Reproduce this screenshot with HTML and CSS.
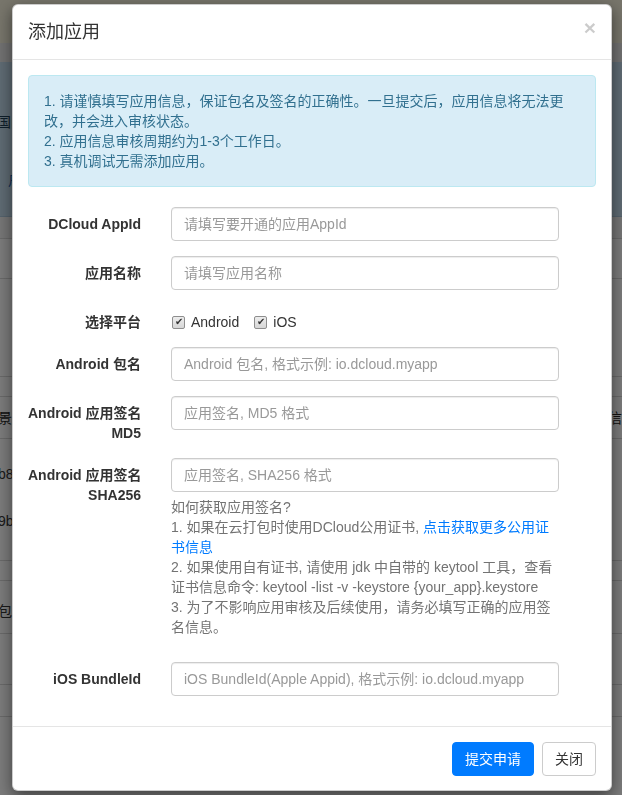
FILE: index.html
```html
<!DOCTYPE html>
<html lang="zh-CN">
  <head>
    <meta charset="UTF-8" />
    <title>添加应用</title>
    <link rel="stylesheet" href="styles.css">
  </head>
  <body>
    <div class="page">
      <div class="topbar"></div>
      <div class="subbar"></div>
      <div class="notice">
        <p class="notice-text">国内用户请注意</p>
        <p class="notice-link">户中心</p>
      </div>
      <div class="spacer"></div>
      <div class="table">
        <div class="tr tr-40"></div>
        <div class="tr tr-98"></div>
        <div class="tr tr-20"></div>
        <div class="tr tr-42 tr-head">
          <span>景</span>
          <span class="cell-right">信息</span>
        </div>
        <div class="tr tr-122 tr-multi">
          <span>b82c</span>
          <span>9b1f</span>
        </div>
        <div class="tr tr-20"></div>
        <div class="tr tr-53 tr-pkg"><span>包名</span></div>
        <div class="tr tr-51"></div>
        <div class="tr tr-32"></div>
        <div class="tr tr-80"></div>
      </div>
    </div>

    <div class="backdrop"></div>

    <div class="modal">
      <div class="modal-dialog">
        <div class="modal-content">
          <div class="modal-header">
            <button class="close" type="button">&times;</button>
            <h4 class="modal-title">添加应用</h4>
          </div>
          <div class="modal-body">
            <div class="alert">
              1. 请谨慎填写应用信息，保证包名及签名的正确性。一旦提交后，应用信息将无法更改，并会进入审核状态。<br>
              2. 应用信息审核周期约为1-3个工作日。<br>
              3. 真机调试无需添加应用。
            </div>
            <form class="form-horizontal">
              <div class="form-group">
                <label class="control-label">DCloud AppId</label>
                <div class="field"><input class="form-control" placeholder="请填写要开通的应用AppId"></div>
              </div>
              <div class="form-group">
                <label class="control-label">应用名称</label>
                <div class="field"><input class="form-control" placeholder="请填写应用名称"></div>
              </div>
              <div class="form-group">
                <label class="control-label">选择平台</label>
                <div class="field checks">
                  <label class="checkbox-inline"><input type="checkbox" checked> Android</label>
                  <label class="checkbox-inline"><input type="checkbox" checked> iOS</label>
                </div>
              </div>
              <div class="form-group">
                <label class="control-label">Android 包名</label>
                <div class="field"><input class="form-control" placeholder="Android 包名, 格式示例: io.dcloud.myapp"></div>
              </div>
              <div class="form-group">
                <label class="control-label">Android 应用签名<br>MD5</label>
                <div class="field"><input class="form-control" placeholder="应用签名, MD5 格式"></div>
              </div>
              <div class="form-group">
                <label class="control-label">Android 应用签名<br>SHA256</label>
                <div class="field">
                  <input class="form-control" placeholder="应用签名, SHA256 格式">
                  <p class="help-block">
                    如何获取应用签名?<br>
                    1. 如果在云打包时使用DCloud公用证书, <a href="#">点击获取更多公用证书信息</a><br>
                    2. 如果使用自有证书, 请使用 jdk 中自带的 keytool 工具，查看证书信息命令: keytool -list -v -keystore {your_app}.keystore<br>
                    3. 为了不影响应用审核及后续使用，请务必填写正确的应用签名信息。
                  </p>
                </div>
              </div>
              <div class="form-group">
                <label class="control-label">iOS BundleId</label>
                <div class="field"><input class="form-control" placeholder="iOS BundleId(Apple Appid), 格式示例: io.dcloud.myapp"></div>
              </div>
            </form>
          </div>
          <div class="modal-footer">
            <button class="btn btn-primary" type="button">提交申请</button>
            <button class="btn btn-default" type="button">关闭</button>
          </div>
        </div>
      </div>
    </div>
  </body>
</html>
```

FILE: styles.css
```css
body {
  margin: 0;
  font-family: "Liberation Sans", "Noto Sans CJK SC", sans-serif;
  font-size: 14px;
  line-height: 20px;
  color: #333;
  background: #f7f7f7;
  overflow: hidden;
}

/* page behind the dialog */
.page {
  height: 795px;
}

.topbar {
  height: 43px;
  background: #eeead6;
}

.subbar {
  height: 19px;
  background: #e2e2e2;
}

.notice {
  height: 155px;
  background: #bdd5e6;
  border-bottom: 1px solid #a9c4d8;
  box-sizing: border-box;
  padding-top: 50px;
}

.notice p {
  margin: 0;
  text-indent: -3px;
}

.notice-text {
  color: #1e3e56;
  margin-bottom: 38px !important;
}

.notice-link {
  color: #1f5fa8;
  padding-left: 11px;
}

.spacer {
  height: 21px;
  background: #ececec;
}

.tr {
  border-top: 1px solid #d2d2d2;
  box-sizing: border-box;
  display: flex;
  justify-content: space-between;
  text-indent: -2px;
}

.tr-20 { height: 20px; }
.tr-32 { height: 32px; }
.tr-40 { height: 40px; }
.tr-42 { height: 42px; }
.tr-51 { height: 51px; }
.tr-53 { height: 53px; }
.tr-80 { height: 80px; }
.tr-98 { height: 98px; }
.tr-122 { height: 122px; }

.tr-head {
  align-items: center;
  color: #222;
}

.cell-right {
  margin-right: -14px;
}

.tr-multi {
  flex-direction: column;
  justify-content: flex-start;
  padding-top: 25px;
  gap: 27px;
}

.tr-pkg {
  align-items: flex-end;
  padding-bottom: 12px;
}

/* dialog */
.backdrop {
  position: fixed;
  inset: 0;
  background: rgba(0, 0, 0, 0.5);
}

.modal {
  position: fixed;
  inset: 0;
}

.modal-dialog {
  width: 600px;
  margin: 4px 0 0 12px;
}

.modal-content {
  background: #fff;
  border: 1px solid rgba(0, 0, 0, 0.2);
  border-radius: 6px;
  box-shadow: 0 5px 15px rgba(0, 0, 0, 0.5);
}

.modal-header {
  padding: 14px 15px;
  border-bottom: 1px solid #e5e5e5;
}

.modal-title {
  margin: 0;
  font-size: 18px;
  font-weight: normal;
  line-height: 26px;
  color: #333;
}

.close {
  float: right;
  margin-top: -2px;
  padding: 0;
  border: 0;
  background: transparent;
  font-family: "Liberation Sans", sans-serif;
  font-size: 21px;
  font-weight: bold;
  line-height: 1;
  color: #000;
  opacity: 0.2;
  cursor: pointer;
}

.modal-body {
  padding: 15px;
}

.alert {
  padding: 15px;
  margin-bottom: 20px;
  border: 1px solid #bce8f1;
  border-radius: 4px;
  background: #d9edf7;
  color: #31708f;
}

.form-group {
  display: grid;
  grid-template-columns: 113px 388px;
  column-gap: 30px;
  margin-bottom: 15px;
}

.control-label {
  padding-top: 7px;
  text-align: right;
  font-weight: bold;
  white-space: nowrap;
}

.form-control {
  display: block;
  width: 100%;
  height: 34px;
  box-sizing: border-box;
  padding: 6px 12px;
  font: inherit;
  color: #555;
  background: #fff;
  border: 1px solid #ccc;
  border-radius: 4px;
  box-shadow: inset 0 1px 1px rgba(0, 0, 0, 0.075);
}

.form-control::placeholder {
  color: #999;
}

.checks {
  display: flex;
  gap: 14px;
  padding-top: 7px;
}

.checkbox-inline {
  display: inline-flex;
  align-items: center;
  gap: 6px;
}

.checkbox-inline input {
  appearance: none;
  width: 13px;
  height: 13px;
  margin: 0 0 0 1px;
  border: 1px solid #8e8e8e;
  border-radius: 2px;
  background: linear-gradient(#ededed, #d6d6d6);
  box-sizing: border-box;
  display: inline-flex;
  align-items: center;
  justify-content: center;
}

.checkbox-inline input:checked::before {
  content: "✔";
  font-size: 10px;
  line-height: 1;
  color: #333;
}

.help-block {
  margin: 5px 0 10px;
  color: #737373;
}

.help-block a {
  color: #007bff;
  text-decoration: none;
}

.modal-footer {
  padding: 15px 15px 14px;
  border-top: 1px solid #e5e5e5;
  display: flex;
  justify-content: flex-end;
  gap: 8px;
}

.btn {
  height: 34px;
  padding: 6px 12px;
  font: inherit;
  border: 1px solid transparent;
  border-radius: 4px;
  cursor: pointer;
}

.btn-primary {
  background: #007bff;
  border-color: #007bff;
  color: #fff;
}

.btn-default {
  background: #fff;
  border-color: #ccc;
  color: #333;
}
```
